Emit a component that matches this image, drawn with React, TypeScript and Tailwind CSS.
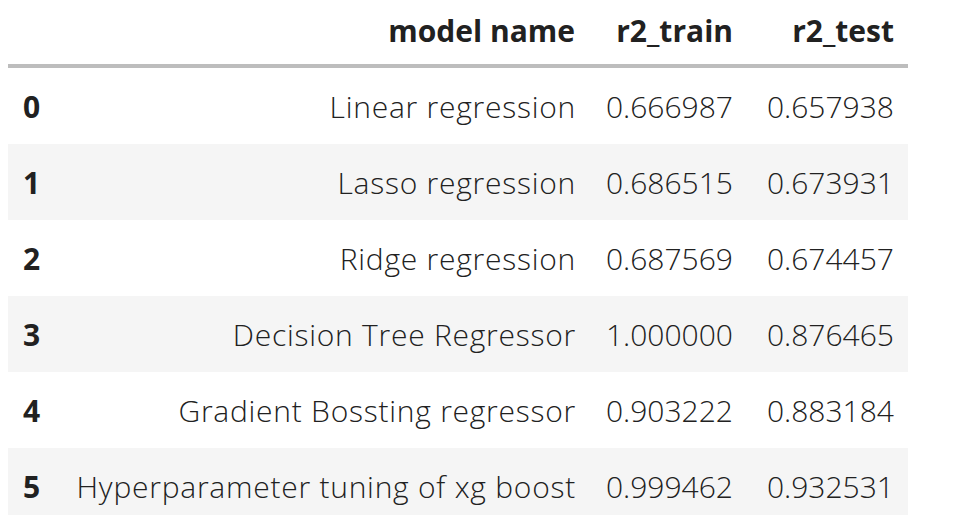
import React from "react";

const rows = [
  ["0", "Linear regression", "0.666987", "0.657938"],
  ["1", "Lasso regression", "0.686515", "0.673931"],
  ["2", "Ridge regression", "0.687569", "0.674457"],
  ["3", "Decision Tree Regressor", "1.000000", "0.876465"],
  ["4", "Gradient Bossting regressor", "0.903222", "0.883184"],
  ["5", "Hyperparameter tuning of xg boost", "0.999462", "0.932531"],
];

export default function App() {
  return (
    <div
      className="bg-white w-[976px] h-[515px] overflow-hidden pl-[8px] text-[#212121]"
      style={{ fontFamily: '"Open Sans", "Noto Sans", sans-serif' }}
    >
      <table className="table-fixed border-separate border-spacing-0 w-[900px] text-[30px]">
        <colgroup>
          <col className="w-[54px]" />
          <col className="w-[527px]" />
          <col className="w-[158px]" />
          <col className="w-[161px]" />
        </colgroup>
        <thead>
          <tr>
            <th className="h-[68px] pb-[4px] px-[14px] border-b-4 border-[#bdbdbd]"></th>
            <th className="h-[68px] pb-[4px] px-[14px] text-right font-bold border-b-4 border-[#bdbdbd]">model name</th>
            <th className="h-[68px] pb-[4px] px-[14px] text-right font-bold border-b-4 border-[#bdbdbd]">r2_train</th>
            <th className="h-[68px] pb-[4px] px-[14px] text-right font-bold border-b-4 border-[#bdbdbd]">r2_test</th>
          </tr>
        </thead>
        <tbody>
          {rows.map((r, i) => (
            <tr key={r[0]} className={i % 2 === 1 ? "bg-[#f5f5f5]" : "bg-white"}>
              <th className="h-[76px] pl-[15px] pr-[8px] text-left font-bold">{r[0]}</th>
              <td className="h-[76px] pl-[14px] pr-[13px] text-right whitespace-nowrap font-light tracking-[0.75px]">{r[1]}</td>
              <td className="h-[76px] px-[14px] text-right font-light">{r[2]}</td>
              <td className="h-[76px] px-[14px] text-right font-light">{r[3]}</td>
            </tr>
          ))}
        </tbody>
      </table>
    </div>
  );
}
